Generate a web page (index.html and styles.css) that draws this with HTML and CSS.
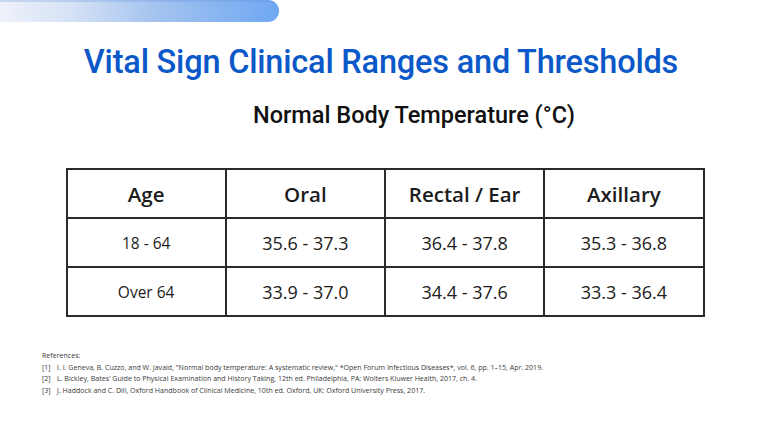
FILE: index.html
```html
<!DOCTYPE html>
<html>
<head>
<meta charset="utf-8">
<link rel="stylesheet" href="styles.css">
</head>
<body>
<div class="slide">
  <div class="topbar"></div>
  <h1 class="title">Vital Sign Clinical Ranges and Thresholds</h1>
  <h2 class="subtitle">Normal Body Temperature (°C)</h2>
  <table class="temps">
    <thead>
      <tr><th>Age</th><th>Oral</th><th>Rectal / Ear</th><th>Axillary</th></tr>
    </thead>
    <tbody>
      <tr><td class="age">18 - 64</td><td>35.6 - 37.3</td><td>36.4 - 37.8</td><td>35.3 - 36.8</td></tr>
      <tr><td class="age">Over 64</td><td>33.9 - 37.0</td><td>34.4 - 37.6</td><td>33.3 - 36.4</td></tr>
    </tbody>
  </table>
  <div class="refs">
    <p>References:</p>
    <p><span class="num">[1]</span>I. I. Geneva, B. Cuzzo, and W. Javaid, "Normal body temperature: A systematic review," *Open Forum Infectious Diseases*, vol. 6, pp. 1–15, Apr. 2019.</p>
    <p><span class="num">[2]</span>L. Bickley, Bates' Guide to Physical Examination and History Taking, 12th ed. Philadelphia, PA: Wolters Kluwer Health, 2017, ch. 4.</p>
    <p><span class="num">[3]</span>J. Haddock and C. Dill, Oxford Handbook of Clinical Medicine, 10th ed. Oxford, UK: Oxford University Press, 2017.</p>
  </div>
</div>
</body>
</html>
```
FILE: styles.css
```css
html, body {
  margin: 0;
  padding: 0;
  background: #ffffff;
}
.slide {
  width: 768px;
  height: 431px;
  position: relative;
  overflow: hidden;
  display: flex;
  flex-direction: column;
  align-items: center;
  font-family: Roboto, "Liberation Sans", sans-serif;
}
.topbar {
  align-self: flex-start;
  width: 279px;
  height: 22px;
  border-radius: 0 11px 11px 0;
  background: linear-gradient(90deg, #eef2fb 0%, #d6e2f5 25%, #a5c4ef 55%, #6ea7f2 100%);
  box-shadow: inset 0 2px 0 rgba(90, 140, 220, 0.25);
}
.title {
  margin: 22px 6px 0 0;
  font-size: 32.5px;
  line-height: 36px;
  font-weight: 500;
  color: #0b58c9;
  letter-spacing: -0.2px;
}
.subtitle {
  margin: 21px 0 0 60px;
  font-size: 23.5px;
  line-height: 28px;
  font-weight: 500;
  color: #111;
}
.temps {
  margin: 39px 0 0 2px;
  width: 639px;
  border-collapse: collapse;
  table-layout: fixed;
  font-family: "Open Sans", "Liberation Sans", sans-serif;
  color: #1c1c1c;
}
.temps th, .temps td {
  border: 2px solid #2b2b2b;
  text-align: center;
  padding: 0;
}
.temps th {
  height: 47px;
  font-size: 20.5px;
  font-weight: 600;
}
.temps td {
  height: 47px;
  font-size: 18px;
  font-weight: 400;
}
.temps td.age {
  font-size: 15.5px;
}
.refs {
  align-self: flex-start;
  margin: 33px 0 0 42px;
  font-family: "Open Sans", "Liberation Sans", sans-serif;
  font-size: 7.05px;
  line-height: 11.7px;
  color: #3a3a3a;
}
.refs p {
  margin: 0;
}
.refs .num {
  display: inline-block;
  width: 15px;
}
```
